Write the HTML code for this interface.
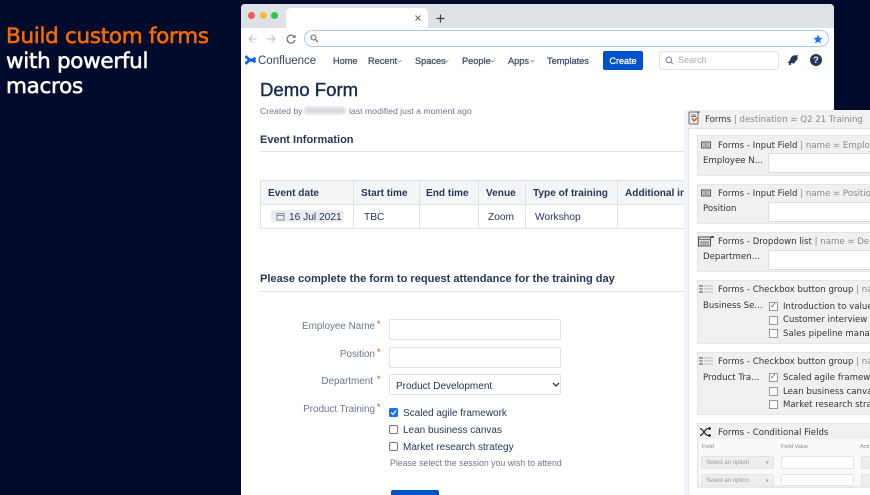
<!DOCTYPE html>
<html><head><meta charset="utf-8">
<style>
html,body{margin:0;padding:0;width:870px;height:495px;overflow:hidden;background:#020b2b;font-family:"Liberation Sans",sans-serif}
.t{position:absolute;white-space:nowrap;line-height:14px}
.b{position:absolute;box-sizing:border-box}
#all{position:absolute;left:0;top:0;width:870px;height:495px;overflow:hidden;filter:blur(.35px)}
.hd{left:6px;font-size:21.5px;line-height:25px;font-family:'DejaVu Sans',sans-serif;letter-spacing:-.3px;-webkit-text-stroke:.55px currentColor}
.nav{font-size:9.2px;color:#42526e;top:54px;-webkit-text-stroke:.3px #42526e}
.th{font-size:10.1px;font-weight:bold;color:#253858;top:187px}
.td{font-size:10.2px;color:#253858;top:211px}
.lab{font-size:9.9px;color:#6b778c;text-align:right;right:495px}
.star{color:#de350b;font-size:9px}
.inp{position:absolute;left:389px;width:172px;height:21px;box-sizing:border-box;background:#fff;border:1px solid #dfe1e6;border-radius:2px}
.p{font-family:"DejaVu Sans",sans-serif;font-size:8.6px;color:#333;transform:translateY(1px)}
.g{color:#8a8a8a}
.box{position:absolute;left:697px;width:180px;background:#f0f0f0;border:1px solid #e6e6e6;box-sizing:border-box}
.fi{position:absolute;left:768px;width:110px;height:20px;background:#fff;border:1px solid #ddd;border-radius:2px;box-sizing:border-box}
.ck{position:absolute;left:769px;width:9px;height:9px;background:#fff;border:1px solid #999;box-sizing:border-box}
</style></head><body><div id="all">

<div class="t hd" style="top:24px;color:#f66a00">Build custom forms</div>
<div class="t hd" style="top:49px;color:#fff">with powerful</div>
<div class="t hd" style="top:74px;color:#fff">macros</div>

<div class="b" style="left:241px;top:4px;width:593px;height:491px;background:#fff;border-radius:4px 4px 0 0"></div>
<div class="b" style="left:241px;top:4px;width:593px;height:24px;background:#dee1e6;border-radius:4px 4px 0 0"></div>
<div class="b" style="left:248px;top:12px;width:7px;height:7px;border-radius:50%;background:#ec5f58"></div>
<div class="b" style="left:260px;top:12px;width:7px;height:7px;border-radius:50%;background:#f5bd2f"></div>
<div class="b" style="left:271px;top:12px;width:7px;height:7px;border-radius:50%;background:#2fc840"></div>
<div class="b" style="left:286px;top:8px;width:142px;height:20px;background:#fff;border-radius:5px 5px 0 0"></div>
<svg class="b" style="left:414px;top:14px" width="8" height="8" viewBox="0 0 8 8"><path d="M1.500 1.500L6.500 6.500M6.500 1.500L1.500 6.500" stroke="#5f6368" stroke-width="1"/></svg>
<svg class="b" style="left:436px;top:14px" width="9" height="9" viewBox="0 0 9 9"><path d="M4.500 .5V8.500M.5 4.500H8.500" stroke="#3c4043" stroke-width="1.200"/></svg>

<svg class="b" style="left:248px;top:34px" width="50" height="10" viewBox="0 0 50 10" fill="none"><path d="M8.500 5H1M4.500 1.500L1 5L4.500 8.500" stroke="#b9bcc1"/><path d="M19 5H27M23.500 1.500L27 5L23.500 8.500" stroke="#b9bcc1"/><path d="M46.500 3A4 4 0 1 0 47 6" stroke="#5f6368" stroke-width="1.100"/><path d="M47.500 .8V3.800H44.500Z" fill="#5f6368"/></svg>
<div class="b" style="left:304px;top:30px;width:525px;height:17px;background:#fff;border:1.200px solid #a8c7fa;border-radius:9px"></div>
<svg class="b" style="left:310px;top:34px" width="9" height="9" viewBox="0 0 9 9" fill="none"><circle cx="3.500" cy="3.500" r="2.500" stroke="#5f6368"/><path d="M5.500 5.500L8 8" stroke="#5f6368" stroke-width="1.200"/></svg>
<svg class="b" style="left:813px;top:34px" width="10" height="10" viewBox="0 0 10 10"><path d="M5 .5L6.300 3.600L9.600 3.900L7.100 6.100L7.900 9.400L5 7.600L2.100 9.400L2.900 6.100L.4 3.900L3.700 3.600Z" fill="#1a73e8"/></svg>

<svg class="b" style="left:245px;top:54px" width="11" height="12" viewBox="0 0 11 12" fill="none"><path d="M.5 10C3.500 6 6 5 10.500 8M.5 2C5 7 7 7 10.500 4" stroke="#0c66e4" stroke-width="2.800"/></svg>
<div class="t" style="left:258px;top:54px;font-size:11.500px;color:#344563">Confluence</div>
<div class="t nav" style="left:333px">Home</div>
<div class="t nav" style="left:368px">Recent</div>
<div class="t nav" style="left:415px">Spaces</div>
<div class="t nav" style="left:462px">People</div>
<div class="t nav" style="left:508px">Apps</div>
<div class="t nav" style="left:547px">Templates</div>
<svg class="b" style="left:397px;top:59px" width="140" height="5" viewBox="0 0 140 5" fill="none" stroke="#8993a4" stroke-width=".8"><path d="M.5 1L2.500 3L4.500 1M47.500 1L49.500 3L51.500 1M93.500 1L95.500 3L97.500 1M133.500 1L135.500 3L137.500 1"/></svg>
<div class="b" style="left:603px;top:51px;width:40px;height:19px;background:#0052cc;border-radius:2px"></div>
<div class="t" style="left:603px;width:40px;text-align:center;top:54px;font-size:9px;color:#fff;-webkit-text-stroke:.3px #fff">Create</div>
<div class="b" style="left:659px;top:51px;width:120px;height:19px;background:#fff;border:1px solid #dfe1e6;border-radius:3px"></div>
<svg class="b" style="left:665px;top:56px" width="9" height="9" viewBox="0 0 9 9" fill="none"><circle cx="3.800" cy="3.800" r="2.800" stroke="#7a869a"/><path d="M5.800 5.800L8 8" stroke="#7a869a"/></svg>
<div class="t" style="left:678px;top:53px;font-size:9px;color:#a5adba">Search</div>
<svg class="b" style="left:786px;top:54px" width="13" height="12" viewBox="0 0 13 12"><path d="M1 8.500L3.500 7L5 3.500C6 1.800 8.500 .8 10.500 1.500L12 1L11.500 2.500C12 4.500 11 6.500 9.500 7.500L8 9.500Z" fill="#253858"/><circle cx="4" cy="10" r="1.200" fill="#253858"/></svg>
<div class="b" style="left:810px;top:54px;width:12px;height:12px;border-radius:50%;background:#253858;color:#fff;font-size:9px;font-weight:bold;line-height:12px;text-align:center">?</div>

<div class="t" style="left:260px;top:78px;font-size:18.600px;line-height:24px;color:#172b4d;-webkit-text-stroke:.4px #172b4d">Demo Form</div>
<div class="t" style="left:260px;top:104px;font-size:8.700px;color:#6b778c">Created by</div>
<div class="b" style="left:304px;top:107px;width:42px;height:7px;background:#d5d8de;border-radius:3px;filter:blur(1.500px)"></div>
<div class="t" style="left:349px;top:104px;font-size:8.700px;color:#6b778c">last modified just a moment ago</div>

<div class="t" style="left:260px;top:133px;font-size:11px;font-weight:bold;color:#253858">Event Information</div>
<div class="b" style="left:260px;top:151px;width:434px;height:1px;background:#dfe1e6"></div>

<div class="b" style="left:260px;top:180px;width:434px;height:24px;background:#f4f5f7"></div>
<div class="b" style="left:260px;top:180px;width:434px;height:1px;background:#dfe1e6"></div>
<div class="b" style="left:260px;top:204px;width:434px;height:1px;background:#dfe1e6"></div>
<div class="b" style="left:260px;top:228px;width:434px;height:1px;background:#dfe1e6"></div>
<div class="b" style="left:260px;top:180px;width:1px;height:49px;background:#dfe1e6"></div>
<div class="b" style="left:353px;top:180px;width:1px;height:49px;background:#dfe1e6"></div>
<div class="b" style="left:419px;top:180px;width:1px;height:49px;background:#dfe1e6"></div>
<div class="b" style="left:478px;top:180px;width:1px;height:49px;background:#dfe1e6"></div>
<div class="b" style="left:525px;top:180px;width:1px;height:49px;background:#dfe1e6"></div>
<div class="b" style="left:617px;top:180px;width:1px;height:49px;background:#dfe1e6"></div>
<div class="t th" style="left:268px">Event date</div>
<div class="t th" style="left:361px">Start time</div>
<div class="t th" style="left:426px">End time</div>
<div class="t th" style="left:486px">Venue</div>
<div class="t th" style="left:533px">Type of training</div>
<div class="t th" style="left:625px">Additional inf</div>
<div class="b" style="left:271px;top:210px;width:72px;height:12px;background:#ebecf0;border-radius:2px"></div>
<svg class="b" style="left:276px;top:212px" width="9" height="9" viewBox="0 0 9 9" fill="none"><rect x="1" y="1.500" width="7" height="6.500" stroke="#6b778c" stroke-width=".8"/><path d="M1 3.500H8" stroke="#6b778c" stroke-width=".8"/></svg>
<div class="t td" style="left:289px">16 Jul 2021</div>
<div class="t td" style="left:364px">TBC</div>
<div class="t td" style="left:488px">Zoom</div>
<div class="t td" style="left:535px">Workshop</div>

<div class="t" style="left:260px;top:272px;font-size:11.050px;font-weight:bold;color:#253858">Please complete the form to request attendance for the training day</div>
<div class="b" style="left:260px;top:291px;width:434px;height:1px;background:#dfe1e6"></div>

<div class="t lab" style="top:320px">Employee Name</div><div class="t star" style="left:377px;top:317px">*</div>
<div class="t lab" style="top:348px">Position</div><div class="t star" style="left:377px;top:345px">*</div>
<div class="t lab" style="top:375px;right:497px">Department</div><div class="t star" style="left:377px;top:372px">*</div>
<div class="t lab" style="top:403px">Product Training</div><div class="t star" style="left:377px;top:400px">*</div>
<div class="inp" style="top:319px"></div>
<div class="inp" style="top:347px"></div>
<div class="inp" style="top:374px"></div>
<div class="t" style="left:396px;top:380px;font-size:10px;color:#253858">Product Development</div>
<svg class="b" style="left:552px;top:382px" width="8" height="6" viewBox="0 0 8 6" fill="none"><path d="M1 1L4 4L7 1" stroke="#253858" stroke-width="1.300"/></svg>
<div class="b" style="left:389px;top:408px;width:9px;height:9px;background:#1a73e8;border-radius:1.500px"></div>
<svg class="b" style="left:389px;top:408px" width="9" height="9" viewBox="0 0 9 9" fill="none"><path d="M2 4.500L4 6.500L7 2.500" stroke="#fff" stroke-width="1.200"/></svg>
<div class="b" style="left:389px;top:425px;width:9px;height:9px;background:#fff;border:1px solid #767676;border-radius:1.500px"></div>
<div class="b" style="left:389px;top:442px;width:9px;height:9px;background:#fff;border:1px solid #767676;border-radius:1.500px"></div>
<div class="t" style="left:403px;top:407px;font-size:10px;color:#253858">Scaled agile framework</div>
<div class="t" style="left:403px;top:424px;font-size:10px;color:#253858">Lean business canvas</div>
<div class="t" style="left:403px;top:441px;font-size:10px;color:#253858">Market research strategy</div>
<div class="t" style="left:390px;top:456px;font-size:8.750px;color:#6b778c">Please select the session you wish to attend</div>
<div class="b" style="left:391px;top:490px;width:48px;height:5px;background:#0052cc;border-radius:2px 2px 0 0"></div>

<!-- Macro panel -->
<div class="b" style="left:684px;top:110px;width:4px;height:385px;background:#f2f4fb"></div>
<div class="b" style="left:688px;top:110px;width:182px;height:385px;background:#fff;border-left:1px solid #e4e4e4"></div>
<div class="b" style="left:688px;top:110px;width:182px;height:19px;background:#f1f1f1;border-bottom:1px solid #e0e0e0"></div>
<svg class="b" style="left:688px;top:110px" width="13" height="16" viewBox="0 0 13 16" fill="none"><rect x="1" y="2" width="9" height="12" rx="1" stroke="#666" stroke-width="1"/><path d="M3 5H8M3 6.500H8" stroke="#777"/><path d="M4 8L6 11L9 8" stroke="#d9531e" stroke-width="1.400"/><path d="M9 2H12" stroke="#444"/></svg>
<div class="t p" style="left:705px;top:112px">Forms <span class="g">| destination = Q2 21 Training</span></div>

<div class="box" style="top:135px;height:41px"></div>
<svg class="b" style="left:701px;top:141px" width="10" height="8" viewBox="0 0 10 8"><rect x=".5" y="1" width="9" height="6" fill="#ddd" stroke="#555"/><path d="M2 3H8M2 5H8" stroke="#555" stroke-width=".8"/></svg>
<div class="t p" style="left:718px;top:138px">Forms - Input Field <span class="g">| name = Employ</span></div>
<div class="t p" style="left:703px;top:153px">Employee N...</div>
<div class="fi" style="top:153px"></div>

<div class="box" style="top:184px;height:40px"></div>
<svg class="b" style="left:701px;top:189px" width="10" height="8" viewBox="0 0 10 8"><rect x=".5" y="1" width="9" height="6" fill="#ddd" stroke="#555"/><path d="M2 3H8M2 5H8" stroke="#555" stroke-width=".8"/></svg>
<div class="t p" style="left:718px;top:186px">Forms - Input Field <span class="g">| name = Positio</span></div>
<div class="t p" style="left:703px;top:201px">Position</div>
<div class="fi" style="top:202px"></div>

<div class="box" style="top:232px;height:40px"></div>
<svg class="b" style="left:698px;top:235px" width="17" height="12" viewBox="0 0 17 12"><rect x=".5" y="2" width="12" height="9" fill="#ddd" stroke="#555"/><path d="M.5 4.500H12.500M2 7H11M2 9H11" stroke="#555" stroke-width=".8"/><rect x="13" y="1" width="3" height="2" fill="#555"/></svg>
<div class="t p" style="left:718px;top:234px">Forms - Dropdown list <span class="g">| name = Dep</span></div>
<div class="t p" style="left:703px;top:249px">Departmen...</div>
<div class="fi" style="top:250px"></div>

<div class="box" style="top:280px;height:64px"></div>
<svg class="b" style="left:699px;top:284px" width="14" height="10" viewBox="0 0 14 10"><path d="M5 2H14M5 5H14M5 8H14" stroke="#bbb"/><rect x="0" y="1" width="4" height="2" fill="#999"/><rect x="0" y="4" width="4" height="2" fill="#aaa"/><rect x="0" y="7" width="4" height="2" fill="#999"/></svg>
<div class="t p" style="left:718px;top:282px">Forms - Checkbox button group <span class="g">| na</span></div>
<div class="t p" style="left:703px;top:298px">Business Se...</div>
<div class="ck" style="top:302px"></div><div class="t p" style="left:770px;top:298px;color:#555;font-size:8px">✓</div>
<div class="ck" style="top:316px"></div>
<div class="ck" style="top:329px"></div>
<div class="t p" style="left:783px;top:299px">Introduction to value</div>
<div class="t p" style="left:783px;top:312px">Customer interview b</div>
<div class="t p" style="left:783px;top:326px">Sales pipeline mana</div>

<div class="box" style="top:352px;height:63px"></div>
<svg class="b" style="left:699px;top:356px" width="14" height="10" viewBox="0 0 14 10"><path d="M5 2H14M5 5H14M5 8H14" stroke="#bbb"/><rect x="0" y="1" width="4" height="2" fill="#999"/><rect x="0" y="4" width="4" height="2" fill="#aaa"/><rect x="0" y="7" width="4" height="2" fill="#999"/></svg>
<div class="t p" style="left:718px;top:354px">Forms - Checkbox button group <span class="g">| na</span></div>
<div class="t p" style="left:703px;top:370px">Product Tra...</div>
<div class="ck" style="top:373px"></div><div class="t p" style="left:770px;top:369px;color:#555;font-size:8px">✓</div>
<div class="ck" style="top:387px"></div>
<div class="ck" style="top:400px"></div>
<div class="t p" style="left:783px;top:370px">Scaled agile framew</div>
<div class="t p" style="left:783px;top:384px">Lean business canva</div>
<div class="t p" style="left:783px;top:397px">Market research stra</div>

<div class="box" style="top:423px;height:65px"></div>
<svg class="b" style="left:700px;top:427px" width="12" height="10" viewBox="0 0 12 10" fill="none" stroke="#222" stroke-width="1.200"><path d="M0 1.500C3 1.500 5 8.500 8 8.500H11M0 8.500C3 8.500 5 1.500 8 1.500H11M9.500 0V3M9.500 7V10"/></svg>
<div class="t p" style="left:718px;top:425px">Forms - Conditional Fields</div>
<div class="b" style="left:699px;top:439px;width:171px;height:46px;background:#fafafa"></div>
<div class="t" style="left:702px;top:440px;font-size:5.500px;color:#888">Field</div>
<div class="t" style="left:781px;top:440px;font-size:5.500px;color:#888">Field Value</div>
<div class="t" style="left:860px;top:440px;font-size:5.500px;color:#888">Acti</div>
<div class="b" style="left:701px;top:456px;width:73px;height:13px;background:#eee;border:1px solid #e4e4e4;border-radius:2px"></div>
<div class="b" style="left:701px;top:474px;width:73px;height:12px;background:#eee;border:1px solid #e4e4e4;border-radius:2px"></div>
<div class="b" style="left:781px;top:456px;width:73px;height:13px;background:#fff;border:1px solid #e4e4e4;border-radius:2px"></div>
<div class="b" style="left:781px;top:474px;width:73px;height:12px;background:#fff;border:1px solid #e4e4e4;border-radius:2px"></div>
<div class="b" style="left:861px;top:456px;width:12px;height:13px;background:#eee;border:1px solid #e4e4e4"></div>
<div class="b" style="left:861px;top:474px;width:12px;height:12px;background:#eee;border:1px solid #e4e4e4"></div>
<div class="t" style="left:706px;top:456px;font-size:6px;color:#999">Select an option</div>
<div class="t" style="left:706px;top:474px;font-size:6px;color:#999">Select an option</div>
<div class="t" style="left:766px;top:456px;font-size:5px;color:#999">▾</div>
<div class="t" style="left:766px;top:474px;font-size:5px;color:#999">▾</div>
</div></body></html>
